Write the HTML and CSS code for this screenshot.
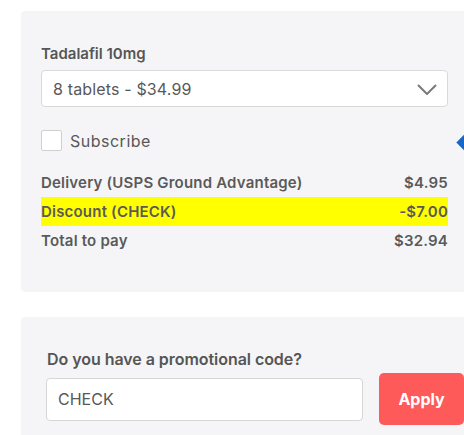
FILE: index.html
```html
<!DOCTYPE html>
<html lang="en">
<head>
<meta charset="utf-8">
<link rel="stylesheet" href="styles.css">
</head>
<body>
<div class="page">
  <section class="card order">
    <h2 class="title">Tadalafil 10mg</h2>
    <div class="select">
      <span>8 tablets - $34.99</span>
      <svg class="chev" width="20" height="11" viewBox="0 0 20 11"><path d="M1 1 L10 10 L19 1" fill="none" stroke="#7a7a7a" stroke-width="2"/></svg>
    </div>
    <label class="sub">
      <span class="box"></span>
      <span>Subscribe</span>
    </label>
    <div class="rows">
      <div class="row"><span>Delivery (USPS Ground Advantage)</span><span>$4.95</span></div>
      <div class="row hl"><span>Discount (CHECK)</span><span>-$7.00</span></div>
      <div class="row"><span>Total to pay</span><span>$32.94</span></div>
    </div>
    <span class="tip"></span>
  </section>
  <section class="card promo">
    <h2 class="title">Do you have a promotional code?</h2>
    <div class="promo-line">
      <div class="input">CHECK</div>
      <button class="apply">Apply</button>
    </div>
  </section>
</div>
</body>
</html>
```
FILE: styles.css
```css
* { box-sizing: border-box; }
html, body { margin: 0; padding: 0; background: #fff; overflow: hidden; }
body { width: 464px; height: 435px; font-family: Inter, "Open Sans", sans-serif; color: #585858; }
.page { padding: 11px 0 0 21px; display: flex; flex-direction: column; gap: 25px; }
.card { background: #f5f5f7; border-radius: 4px; width: 460px; position: relative; }
.order { height: 281px; padding: 33px 0 0 20px; }
.title { margin: 0; font-size: 15px; line-height: 20px; font-weight: 600; color: #565656; }
.select { margin-top: 6px; width: 407px; height: 37px; background: #fff; border: 1px solid #d9d9d9; border-radius: 4px; display: flex; align-items: center; justify-content: space-between; padding: 0 10px 0 11px; font-size: 16px; letter-spacing: 0.15px; color: #585858; }
.chev { margin-top: 1px; }
.sub { margin-top: 23px; display: flex; align-items: center; gap: 8px; font-size: 16px; letter-spacing: 0.5px; height: 21px; }
.box { width: 21px; height: 21px; background: #fff; border: 1px solid #cfcfcf; border-radius: 2px; }
.rows { margin-top: 17px; width: 407px; }
.row { height: 29px; display: flex; align-items: center; justify-content: space-between; font-size: 15px; letter-spacing: 0.2px; font-weight: 600; color: #5a5a5a; }
.hl { background: #ffff00; }
.tip { position: absolute; left: 438px; top: 125px; width: 13px; height: 13px; background: #1668c4; transform: rotate(45deg); }
.promo { height: 130px; padding: 32px 0 0 25px; }
.promo .title { padding-left: 1px; font-size: 16px; letter-spacing: -0.05px; }
.promo-line { margin-top: 4px; display: flex; align-items: center; gap: 16px; }
.input { width: 317px; height: 43px; background: #fff; border: 1px solid #d6d6d6; border-radius: 4px; display: flex; align-items: center; padding-left: 11px; font-size: 16px; color: #585858; }
.apply { width: 85px; height: 52px; border: 0; border-radius: 5px; background: #ff5a5a; color: #fff; font-family: inherit; font-size: 16px; font-weight: 700; padding: 0; }
```
